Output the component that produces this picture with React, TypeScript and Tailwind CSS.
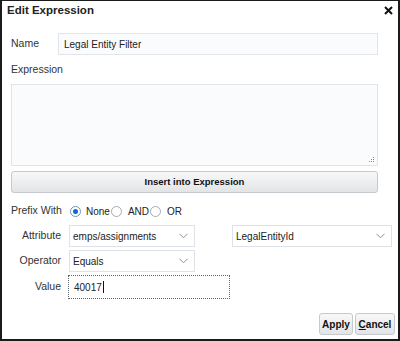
import React from "react";

const font = { fontFamily: '"Liberation Sans", Arial, sans-serif' };

function Chevron() {
  return (
    <svg width="9" height="6" viewBox="0 0 9 6" className="shrink-0">
      <path d="M0.5 0.8 L4.5 4.8 L8.5 0.8" fill="none" stroke="#8a8f95" strokeWidth="1" />
    </svg>
  );
}

function Select({ value, w }: { value: string; w: string }) {
  return (
    <div
      className={`${w} h-[22px] flex items-center justify-between pl-[3px] pr-[6px] border border-[#dfe3e8] bg-white text-[10px] text-[#222]`}
    >
      <span>{value}</span>
      <Chevron />
    </div>
  );
}

function Radio({ checked }: { checked?: boolean }) {
  return (
    <span
      className={`w-[11px] h-[11px] rounded-full border flex items-center justify-center bg-white shrink-0 ${
        checked ? "border-[#6f94c6]" : "border-[#a7abb0]"
      }`}
    >
      {checked && <span className="w-[5px] h-[5px] rounded-full bg-[#0a6ad6]" />}
    </span>
  );
}

export default function App() {
  return (
    <div
      style={font}
      className="w-[400px] h-[341px] bg-white border-l-2 border-r-2 border-b-2 border-t border-[#1b1b1b] flex flex-col text-[#333]"
    >
      {/* title */}
      <div className="h-[19px] flex items-center justify-between pl-[5px] pr-[5px]">
        <span className="text-[11.5px] font-bold text-[#222]">Edit Expression</span>
        <svg width="9" height="9" viewBox="0 0 9 9">
          <path d="M1 1 L8 8 M8 1 L1 8" stroke="#111" strokeWidth="2" />
        </svg>
      </div>

      {/* name */}
      <div className="mt-[13px] h-[22px] flex items-center">
        <span className="pl-[9px] w-[56px] text-[10.5px] text-[#333]">Name</span>
        <div className="w-[320px] h-[22px] flex items-center pl-[5px] border border-[#e1e5ea] bg-[#fafbfd] text-[10px] text-[#222]">
          Legal Entity Filter
        </div>
      </div>

      {/* expression */}
      <div className="mt-[7px] h-[14px] leading-[14px] pl-[9px] text-[10.5px] text-[#333]">Expression</div>
      <div className="mt-[8px] ml-[9px] w-[367px] h-[82px] border border-[#e1e5ea] bg-[#fafbfd] relative">
        <svg width="7" height="7" viewBox="0 0 7 7" className="absolute right-[2px] bottom-[2px]">
          <rect x="5" y="1" width="1" height="1" fill="#8a8a8a" />
          <rect x="3" y="3" width="1" height="1" fill="#8a8a8a" />
          <rect x="5" y="3" width="1" height="1" fill="#8a8a8a" />
          <rect x="1" y="5" width="1" height="1" fill="#8a8a8a" />
          <rect x="3" y="5" width="1" height="1" fill="#8a8a8a" />
          <rect x="5" y="5" width="1" height="1" fill="#8a8a8a" />
        </svg>
      </div>
      <div className="mt-[5px] ml-[9px] w-[367px] h-[22px] flex items-center justify-center rounded-[3px] border border-[#c5cacf] bg-linear-to-b from-[#f8f8f9] to-[#e2e4e6] text-[9.5px] font-bold text-[#111]">
        Insert into Expression
      </div>

      {/* prefix */}
      <div className="mt-[11px] h-[14px] flex items-center text-[10px]">
        <span className="pl-[9px] w-[68px] text-[10.5px] text-[#333]">Prefix With</span>
        <Radio checked />
        <span className="ml-[5px] text-[#222]">None</span>
        <span className="ml-[1px]">
          <Radio />
        </span>
        <span className="ml-[6px] text-[#222]">AND</span>
        <span className="ml-[1px]">
          <Radio />
        </span>
        <span className="ml-[6px] text-[#222]">OR</span>
      </div>

      {/* attribute */}
      <div className="mt-[7px] h-[22px] flex items-center">
        <span className="w-[59px] text-right text-[10.5px] text-[#333]">Attribute</span>
        <span className="ml-[8px]">
          <Select value="emps/assignments" w="w-[126px]" />
        </span>
        <span className="ml-[37px]">
          <Select value="LegalEntityId" w="w-[160px]" />
        </span>
      </div>

      {/* operator */}
      <div className="mt-[3px] h-[22px] flex items-center">
        <span className="w-[59px] text-right text-[10.5px] text-[#333]">Operator</span>
        <span className="ml-[8px]">
          <Select value="Equals" w="w-[126px]" />
        </span>
      </div>

      {/* value */}
      <div className="mt-[3px] h-[24px] flex items-center">
        <span className="w-[59px] text-right text-[10.5px] text-[#333]">Value</span>
        <div className="ml-[7px] w-[162px] h-[24px] flex items-center pl-[5px] border border-dotted border-[#666] bg-white text-[10px] text-[#222]">
          40017
          <span className="ml-[1px] w-px h-[12px] bg-[#111]" />
        </div>
      </div>

      {/* buttons */}
      <div className="mt-[14px] flex justify-end gap-[2px] pr-[3px]">
        <div className="w-[34px] h-[22px] flex items-center justify-center rounded-[3px] border border-[#c5cacf] bg-linear-to-b from-[#f8f8f9] to-[#e2e4e6] text-[10px] font-bold text-[#111]">
          Apply
        </div>
        <div className="w-[40px] h-[22px] flex items-center justify-center rounded-[3px] border border-[#c5cacf] bg-linear-to-b from-[#f8f8f9] to-[#e2e4e6] text-[10px] font-bold text-[#111]">
          <span className="underline">C</span>ancel
        </div>
      </div>
    </div>
  );
}
